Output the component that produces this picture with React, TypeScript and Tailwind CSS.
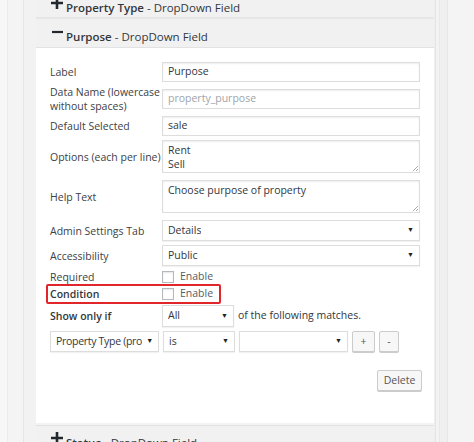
import { ReactNode } from "react";

const font = { fontFamily: '"Open Sans", "Noto Sans", sans-serif' };

function Header({ icon, name, type, className = "" }: { icon: "+" | "-"; name: string; type: string; className?: string }) {
  return (
    <div className={`shrink-0 flex items-center h-[28px] bg-[#f1f1f1] border-b border-[#e2e2e2] pl-[15px] text-[11.5px] text-[#32373c] ${className}`}>
      <span className="w-[12px] flex justify-center -mt-[3px] mr-[3px]">
        {icon === "+" ? (
          <svg width="12" height="12" viewBox="0 0 12 12">
            <path d="M6 0v12M0 6h12" stroke="#23282d" strokeWidth="2.6" />
          </svg>
        ) : (
          <svg width="11" height="12" viewBox="0 0 11 12">
            <path d="M0 6h11" stroke="#23282d" strokeWidth="2.2" />
          </svg>
        )}
      </span>
      <span className="mt-[7px]">
        <span className="font-semibold">{name}</span> - {type}
      </span>
    </div>
  );
}

function Row({ label, children, className = "", bold = false }: { label: ReactNode; children: ReactNode; className?: string; bold?: boolean }) {
  return (
    <div className={`shrink-0 grid grid-cols-[112px_258px] items-center ${className}`}>
      <div className={`text-[10.5px] leading-[14px] text-[#3c4146] ${bold ? "font-semibold text-[#32373c]" : ""}`}>{label}</div>
      <div>{children}</div>
    </div>
  );
}

function TextBox({ value, placeholder }: { value?: string; placeholder?: string }) {
  return (
    <div className="h-[20px] border border-[#dddddd] shadow-[inset_0_1px_2px_rgba(0,0,0,0.07)] bg-white px-[5px] flex items-center text-[10.5px]">
      {value ? <span className="text-[#32373c]">{value}</span> : <span className="text-[#a0a5aa]">{placeholder}</span>}
    </div>
  );
}

function TextArea({ lines }: { lines: string[] }) {
  return (
    <div className="relative h-[33px] border border-[#dddddd] shadow-[inset_0_1px_2px_rgba(0,0,0,0.07)] bg-white px-[5px] pt-[2px] text-[10.5px] leading-[14px] text-[#32373c]">
      {lines.map((l) => (
        <div key={l}>{l}</div>
      ))}
      <svg className="absolute right-[1px] bottom-[1px]" width="6" height="6" viewBox="0 0 6 6">
        <path d="M6 1L1 6M6 4L4 6" stroke="#9a9a9a" strokeWidth="0.8" />
      </svg>
    </div>
  );
}

function Select({ value, className = "" }: { value: string; className?: string }) {
  return (
    <div className={`h-[21px] border border-[#dddddd] shadow-[0_1px_1px_rgba(0,0,0,0.05)] bg-white pl-[5px] pr-[5px] flex items-center justify-between text-[10.5px] text-[#32373c] ${className}`}>
      <span className="whitespace-nowrap overflow-hidden">{value}</span>
      <span className="text-[7px] text-[#222] ml-[2px] shrink-0">▼</span>
    </div>
  );
}

function Check() {
  return (
    <div className="flex items-center gap-[6px] text-[10.5px] text-[#555d66] h-[12px]">
      <span className="w-[12px] h-[12px] border border-[#b4b9be] bg-white shadow-[inset_0_1px_2px_rgba(0,0,0,0.1)]" />
      <span>Enable</span>
    </div>
  );
}

function Button({ children, className = "" }: { children: ReactNode; className?: string }) {
  return (
    <div className={`h-[21px] border border-[#cccccc] rounded-[2px] bg-[#f7f7f7] shadow-[0_1px_0_#cccccc] flex items-center justify-center text-[10.5px] text-[#555] ${className}`}>
      {children}
    </div>
  );
}

export default function App() {
  return (
    <div className="w-[474px] h-[442px] overflow-hidden flex items-start bg-[#f3f3f3]" style={font}>
      {/* left gutter */}
      <div className="w-[36px] h-full flex shrink-0">
        <div className="w-[8px] bg-[#f7f7f7] border-r border-[#ececec]" />
        <div className="w-[16px] bg-[#f4f4f4] border-r border-[#e6e6e6]" />
        <div className="flex-1 bg-[#f2f2f2]" />
      </div>

      {/* field list */}
      <div className="w-[398px] shrink-0 flex flex-col">
        <Header icon="+" name="Property Type" type="DropDown Field" className="-mt-[9px] border-b-[2px] border-[#e6e6e6]" />
        <Header icon="-" name="Purpose" type="DropDown Field" className="h-[29px]" />

        <div className="shrink-0 bg-white h-[375px] px-[14px] pt-[14px] flex flex-col">
          <Row label="Label">
            <TextBox value="Purpose" />
          </Row>
          <Row label={<>Data Name (lowercase<br />without spaces)</>} className="mt-[7px] grid-rows-[20px]">
            <TextBox placeholder="property_purpose" />
          </Row>
          <Row label="Default Selected" className="mt-[7px]">
            <TextBox value="sale" />
          </Row>
          <Row label="Options (each per line)" className="mt-[4px]">
            <TextArea lines={["Rent", "Sell"]} />
          </Row>
          <Row label="Help Text" className="mt-[7px]">
            <TextArea lines={["Choose purpose of property"]} />
          </Row>
          <Row label="Admin Settings Tab" className="mt-[7px]">
            <Select value="Details" />
          </Row>
          <Row label="Accessibility" className="mt-[4px]">
            <Select value="Public" />
          </Row>
          <Row label="Required" className="mt-[5px] grid-rows-[12px]">
            <Check />
          </Row>

          {/* highlighted condition toggle */}
          <div className="relative shrink-0 mt-[1px] h-[20px]">
            <div className="absolute -left-[4px] top-0 w-[175px] h-[20px] border-[2px] border-[#e0262b] rounded-[2px]" />
            <Row label="Condition" bold className="h-[20px]">
              <Check />
            </Row>
          </div>

          <Row label="Show only if" bold className="mt-[1px]">
            <div className="flex items-center">
              <Select value="All" className="w-[72px] h-[22px]" />
              <span className="ml-[4px] text-[10.5px] text-[#32373c]">of the following matches.</span>
            </div>
          </Row>

          <div className="shrink-0 flex items-center mt-[4px] gap-[4px]">
            <Select value="Property Type (pro" className="w-[109px] h-[20px] tracking-[-0.3px] pr-[4px]" />
            <Select value="is" className="w-[72px] h-[20px]" />
            <Select value="" className="w-[109px] h-[20px]" />
            <Button className="w-[23px]">+</Button>
            <Button className="w-[20px]">-</Button>
          </div>

          <div className="shrink-0 flex justify-end mt-[18px] -mr-[2px]">
            <Button className="w-[45px]">Delete</Button>
          </div>
        </div>

        <div className="shrink-0 mt-[2px] border-t border-[#e2e2e2]">
          <Header icon="+" name="Status" type="DropDown Field" />
        </div>
      </div>

      {/* right gutter */}
      <div className="flex-1 h-full flex">
        <div className="w-[2px] bg-[#efefef] border-r border-[#e4e4e4]" />
        <div className="w-[4px] bg-[#f3f3f3] border-r border-[#e8e8e8]" />
        <div className="w-[8px] bg-[#f0f0f0] border-r border-[#e6e6e6]" />
        <div className="flex-1 bg-[#f4f4f4]" />
      </div>
    </div>
  );
}
